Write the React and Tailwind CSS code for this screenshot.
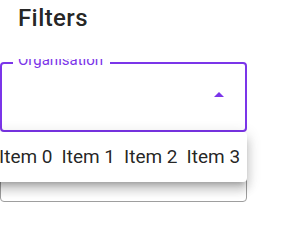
export default function App() {
  return (
    <div className="relative w-[298px] h-[251px] overflow-hidden bg-white" style={{ fontFamily: "Roboto, 'Liberation Sans', sans-serif" }}>
      <div className="h-[62px] pl-[18px] pt-[4px] text-[24px] leading-[28px] tracking-[0.4px] font-medium text-[rgba(0,0,0,0.87)]">Filters</div>
      <div className="relative w-[247px] h-[70px] border-2 border-[#7b35e9] rounded-[4px]">
        <span className="absolute left-[11px] top-[-2px] w-[97px] h-[2px] bg-white"></span>
        <span className="absolute left-[16px] top-[-5px] h-[11px] overflow-hidden">
          <span className="block mt-[-6px] text-[15px] leading-[15px] text-[#7b35e9] whitespace-nowrap">Organisation</span>
        </span>
        <svg className="absolute left-[205px] top-[19px]" width="24" height="24" viewBox="0 0 24 24">
          <path d="M7 14l5-5 5 5z" fill="#7b35e9" />
        </svg>
      </div>
      <div className="mt-[14px] w-[247px] h-[56px] border border-[#9e9e9e] rounded-[4px]"></div>
      <div className="absolute left-[-20px] top-[132px] w-[267px] h-[50px] bg-white rounded-[4px] flex items-center pl-[19px] shadow-[0px_5px_5px_-3px_rgba(0,0,0,0.2),0px_8px_10px_1px_rgba(0,0,0,0.14),0px_3px_14px_2px_rgba(0,0,0,0.12)]">
        <div className="flex gap-[9px] text-[19px] leading-[22px] text-[rgba(0,0,0,0.87)] whitespace-nowrap">
          <span>Item 0</span>
          <span>Item 1</span>
          <span>Item 2</span>
          <span>Item 3</span>
        </div>
      </div>
    </div>
  );
}
